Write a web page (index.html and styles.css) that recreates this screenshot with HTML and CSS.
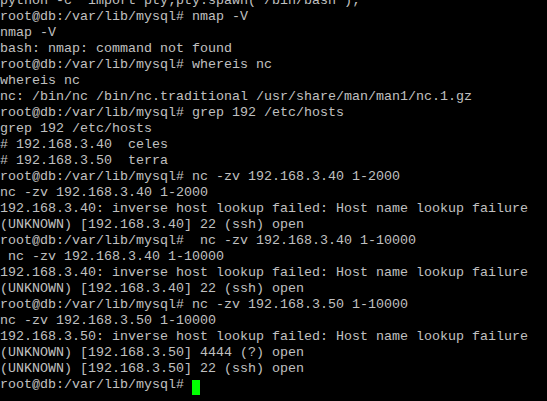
FILE: index.html
```html
<!DOCTYPE html>
<html>
<head>
<meta charset="utf-8">
<link rel="stylesheet" href="styles.css">
</head>
<body>
<pre class="term">python -c 'import pty;pty.spawn("/bin/bash");'
root@db:/var/lib/mysql# nmap -V
nmap -V
bash: nmap: command not found
root@db:/var/lib/mysql# whereis nc
whereis nc
nc: /bin/nc /bin/nc.traditional /usr/share/man/man1/nc.1.gz
root@db:/var/lib/mysql# grep 192 /etc/hosts
grep 192 /etc/hosts
# 192.168.3.40  celes
# 192.168.3.50  terra
root@db:/var/lib/mysql# nc -zv 192.168.3.40 1-2000
nc -zv 192.168.3.40 1-2000
192.168.3.40: inverse host lookup failed: Host name lookup failure
(UNKNOWN) [192.168.3.40] 22 (ssh) open
root@db:/var/lib/mysql#  nc -zv 192.168.3.40 1-10000
 nc -zv 192.168.3.40 1-10000
192.168.3.40: inverse host lookup failed: Host name lookup failure
(UNKNOWN) [192.168.3.40] 22 (ssh) open
root@db:/var/lib/mysql# nc -zv 192.168.3.50 1-10000
nc -zv 192.168.3.50 1-10000
192.168.3.50: inverse host lookup failed: Host name lookup failure
(UNKNOWN) [192.168.3.50] 4444 (?) open
(UNKNOWN) [192.168.3.50] 22 (ssh) open
root@db:/var/lib/mysql# <span class="cursor"> </span></pre>
</body>
</html>
```
FILE: styles.css
```css
html, body {
  margin: 0;
  padding: 0;
  background: #000;
  overflow: hidden;
}
.term {
  margin: -7px 0 0 0;
  padding: 0;
  font-family: "Liberation Mono", "Courier New", monospace;
  font-size: 13.333px;
  line-height: 16px;
  color: #c0c0c0;
  white-space: pre;
}
.cursor {
  display: inline-block;
  width: 8px;
  height: 15px;
  background: #00ff00;
  vertical-align: -3px;
}
```
